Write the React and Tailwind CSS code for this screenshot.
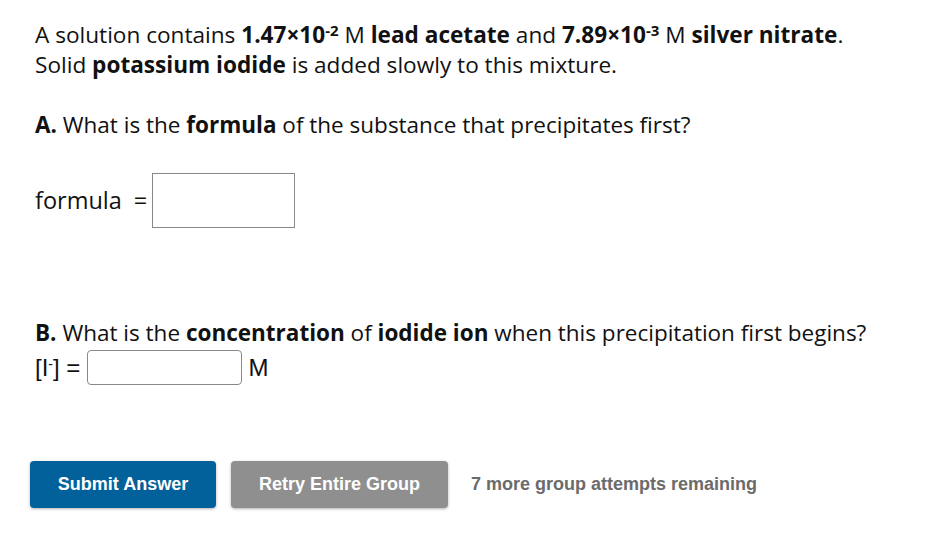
export default function App() {
  return (
    <div className="w-[933px] h-[547px] bg-white text-[#111] font-['Open_Sans',sans-serif] overflow-hidden">
      <div className="pl-[35px] pt-[20px]">
        <p className="text-[22.6px] leading-[30px]">
          A solution contains <b>1.47×10<sup className="text-[15px]">-2</sup></b> M{" "}
          <b>lead acetate</b> and <b>7.89×10<sup className="text-[15px]">-3</sup></b> M{" "}
          <b>silver nitrate</b>.
          <br />
          Solid <b>potassium iodide</b> is added slowly to this mixture.
        </p>

        <p className="mt-[30px] text-[22.5px] leading-[30px]">
          <b>A.</b> What is the <b>formula</b> of the substance that precipitates first?
        </p>

        <div className="mt-[33px] flex items-center">
          <span className="text-[23.5px]">formula</span>
          <span className="ml-[12px] text-[23.5px]">=</span>
          <div className="ml-[5px] w-[143px] h-[55px] border border-[#888] bg-white" />
        </div>

        <p className="mt-[90px] text-[22.5px] leading-[30px]">
          <b>B.</b> What is the <b>concentration</b> of <b>iodide ion</b> when this
          precipitation first begins?
        </p>

        <div className="mt-[2px] flex items-center font-['Liberation_Sans',sans-serif] text-[24px] leading-[28px]">
          <span>
            [I<sup className="text-[14px]">-</sup>] =
          </span>
          <div className="ml-[7px] w-[155px] h-[35px] border border-[#888] rounded-[4px] bg-white" />
          <span className="ml-[6px]">M</span>
        </div>
      </div>

      <div className="mt-[76px] ml-[30px] flex items-center font-['Liberation_Sans',sans-serif] font-bold text-[18px]">
        <button className="w-[186px] h-[47px] rounded-[4px] bg-[#02609a] text-white shadow-[0_1px_3px_rgba(0,0,0,0.3)]">
          Submit Answer
        </button>
        <button className="ml-[15px] w-[217px] h-[47px] rounded-[4px] bg-[#8f8f8f] text-white shadow-[0_1px_3px_rgba(0,0,0,0.3)]">
          Retry Entire Group
        </button>
        <span className="ml-[23px] text-[#6b6b6b]">7 more group attempts remaining</span>
      </div>
    </div>
  );
}
